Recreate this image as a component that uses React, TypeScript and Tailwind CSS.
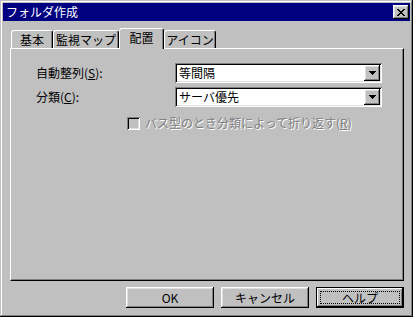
import React from "react";

const raised =
  "shadow-[inset_-1px_-1px_0_#000,inset_1px_1px_0_#fff,inset_-2px_-2px_0_#808080,inset_2px_2px_0_#dfdfdf]";
const sunken =
  "shadow-[inset_1px_1px_0_#808080,inset_-1px_-1px_0_#fff,inset_2px_2px_0_#000,inset_-2px_-2px_0_#dfdfdf]";

const Mn = ({ c }: { c: string }) => (
  <>
    (<span className="underline underline-offset-[1px]">{c}</span>)
  </>
);

const Tab = ({ label, width, active }: { label: string; width: string; active?: boolean }) => (
  <div
    className={`${width} ${
      active ? "h-[21px] -mb-px relative z-10 pb-[3px]" : "h-[18px]"
    } flex items-center justify-center bg-[#c0c0c0] border-l border-t border-white border-r border-r-black rounded-t-[3px] shadow-[inset_-1px_0_0_#808080]`}
  >
    {label}
  </div>
);

const Combo = ({ value }: { value: string }) => (
  <div className={`w-[207px] h-[20px] bg-white flex items-center p-[2px] ${sunken}`}>
    <span className="flex-1 pl-[2px] leading-none">{value}</span>
    <div className={`w-[16px] h-[16px] bg-[#c0c0c0] flex items-center justify-center ${raised}`}>
      <svg width="7" height="4" viewBox="0 0 7 4" shapeRendering="crispEdges">
        <path d="M0 0h7v1h-1v1h-1v1h-1v1h-1v-1h-1v-1h-1v-1h-1z" fill="#000" />
      </svg>
    </div>
  </div>
);

const Button = ({ label, def }: { label: string; def?: boolean }) => (
  <div
    className={`w-[88px] h-[21px] bg-[#c0c0c0] flex items-center justify-center ${
      def
        ? "border border-black shadow-[inset_-1px_-1px_0_#000,inset_1px_1px_0_#fff,inset_-2px_-2px_0_#808080]"
        : raised
    }`}
  >
    {def ? (
      <div className="w-[80px] h-[13px] border border-dotted border-black flex items-center justify-center">
        {label}
      </div>
    ) : (
      label
    )}
  </div>
);

export default function App() {
  return (
    <div
      className={`w-[413px] h-[317px] bg-[#c0c0c0] p-[3px] flex flex-col text-[12px] text-black font-['Noto_Sans_CJK_JP','Noto_Sans_CJK_SC',sans-serif] shadow-[inset_-1px_-1px_0_#000,inset_1px_1px_0_#c0c0c0,inset_-2px_-2px_0_#808080,inset_2px_2px_0_#fff]`}
    >
      <div className="h-[18px] bg-[#000080] flex items-center justify-between pl-[3px] pr-[1px]">
        <span className="text-white leading-none">フォルダ作成</span>
        <div className={`w-[16px] h-[14px] bg-[#c0c0c0] flex items-center justify-center ${raised}`}>
          <svg width="8" height="7" viewBox="0 0 8 7" shapeRendering="crispEdges">
            <path
              d="M0 0h2v1h1v1h2v-1h1v-1h2v1h-1v1h-1v1h-1v1h1v1h1v1h1v1h-2v-1h-1v-1h-2v1h-1v1h-2v-1h1v-1h1v-1h1v-1h-1v-1h-1v-1h-1z"
              fill="#000"
            />
          </svg>
        </div>
      </div>

      <div className="mt-[7px] ml-[7px] h-[20px] flex items-end pl-px">
        <Tab label="基本" width="w-[42px]" />
        <Tab label="監視マップ" width="w-[66px]" />
        <Tab label="配置" width="w-[45px]" active />
        <Tab label="アイコン" width="w-[52px]" />
      </div>

      <div className="ml-[7px] mr-[6px] h-[233px] border-l border-t border-white border-r border-b border-r-black border-b-black shadow-[inset_-1px_-1px_0_#808080] pt-[14px] pl-[25px] flex flex-col">
        <div className="flex items-center">
          <span className="w-[139px]">
            自動整列<Mn c="S" />:
          </span>
          <Combo value="等間隔" />
        </div>
        <div className="flex items-center mt-[4px]">
          <span className="w-[139px]">
            分類<Mn c="C" />:
          </span>
          <Combo value="サーバ優先" />
        </div>
        <div className="flex items-center mt-[7px] ml-[91px] text-[#808080] [text-shadow:1px_1px_0_#fff]">
          <div className="w-[13px] h-[13px] shadow-[inset_1px_1px_0_#808080,inset_-1px_-1px_0_#fff,inset_2px_2px_0_#000,inset_-2px_-2px_0_#dfdfdf]" />
          <span className="ml-[5px]">
            バス型のとき分類によって折り返す<Mn c="R" />
          </span>
        </div>
      </div>

      <div className="mt-[6px] flex justify-end gap-[7px] pr-[6px]">
        <Button label="OK" />
        <Button label="キャンセル" />
        <Button label="ヘルプ" def />
      </div>
    </div>
  );
}
